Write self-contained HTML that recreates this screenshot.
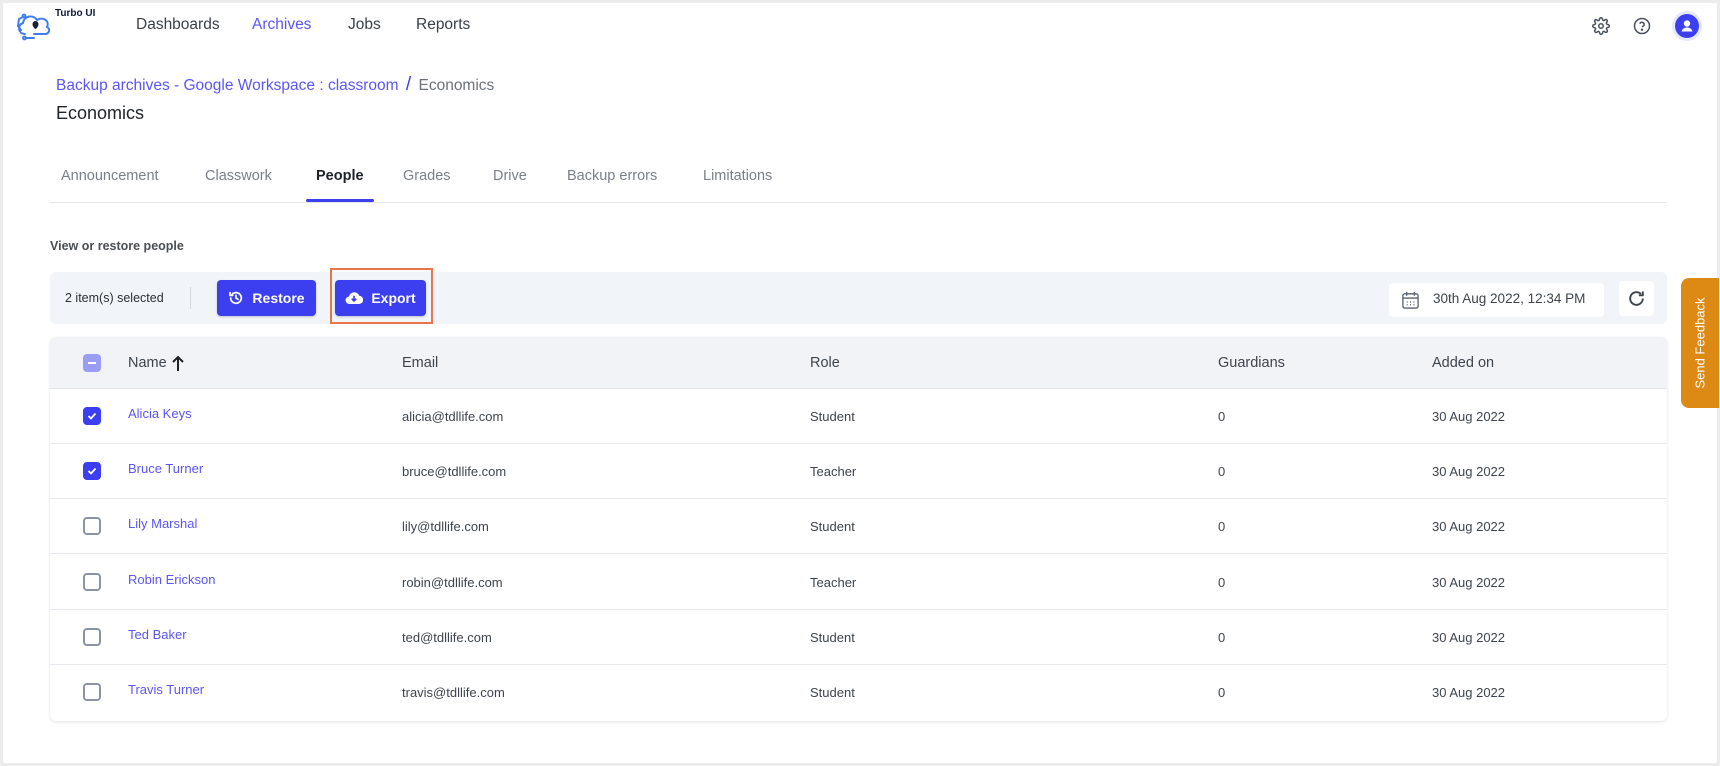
<!DOCTYPE html>
<html><head><meta charset="utf-8"><style>
*{box-sizing:border-box;margin:0;padding:0}
body{width:1720px;height:766px;background:#ececec;font-family:"Liberation Sans",sans-serif;color:#343a40;position:relative;overflow:hidden}
.page{position:absolute;left:3px;top:3px;width:1714px;height:760px;background:#fff}
.a{position:absolute;white-space:nowrap}
.nav{font-size:15.5px;color:#3a3f47;top:16px}
.tab{font-size:14.5px;color:#7a7f87;top:168px}
.tb{background:#f1f4f8;border-radius:6px}
.btn{background:#3b3ff0;color:#fff;border-radius:4px;font-weight:bold;font-size:14px;display:flex;align-items:center;justify-content:center;gap:8px;box-shadow:0 1px 2px rgba(0,0,0,.2)}
.th{font-size:14.5px;color:#3e444c;top:355px}
.row{position:absolute;left:50px;width:1617px;height:55px;border-bottom:1px solid #e6e9ee;font-size:13px;color:#3e444c}
.row span{position:absolute;top:20px}
.row .n{left:78px;color:#5b55f5}
.cb{position:absolute;left:33px;top:18px;width:18px;height:18px;border-radius:4px;border:2px solid #8a94a6;background:#fff}
.cb.on{background:#3b3ff0;border-color:#3b3ff0}
</style></head><body>
<div class="page"></div>
<svg class="a" style="left:14px;top:10px" width="38" height="32" viewBox="0 0 38 32" fill="none" stroke="#3d7df0" stroke-width="2" stroke-linecap="round"><path d="M11 24 C4 24 3 15 9 13 C10 6 19 4 23 10 C29 6 36 11 33 17 C37 19 35 24 31 24 L20 24"/><path d="M9 7 L5 9 L4 16 L7 20"/><circle cx="10" cy="6" r="1.4"/><path d="M12 28 L20 28"/><circle cx="10.5" cy="28" r="1.4"/><path d="M19 14 a2.5 2.5 0 1 1 5 0 c0 2.5 -2.5 4.5 -2.5 4.5 c0 0 -2.5 -2 -2.5 -4.5z" fill="#1a1f36" stroke="#1a1f36" stroke-width="1"/></svg>
<div class="a" style="left:55px;top:8px;font-size:10px;font-weight:bold;color:#111a3a">Turbo UI</div>
<div class="a nav" style="left:136px">Dashboards</div>
<div class="a nav" style="left:252px;color:#5b55f5">Archives</div>
<div class="a nav" style="left:348px">Jobs</div>
<div class="a nav" style="left:416px">Reports</div>
<svg class="a" style="left:1592px;top:17px" width="18" height="18" viewBox="0 0 24 24" fill="none" stroke="#4a5160" stroke-width="2"><circle cx="12" cy="12" r="3"/><path d="M19.4 15a1.7 1.7 0 0 0 .3 1.8l.1.1a2 2 0 1 1-2.8 2.8l-.1-.1a1.7 1.7 0 0 0-1.8-.3 1.7 1.7 0 0 0-1 1.5V21a2 2 0 1 1-4 0v-.1a1.7 1.7 0 0 0-1.1-1.5 1.7 1.7 0 0 0-1.8.3l-.1.1a2 2 0 1 1-2.8-2.8l.1-.1a1.7 1.7 0 0 0 .3-1.8 1.7 1.7 0 0 0-1.5-1H3a2 2 0 1 1 0-4h.1a1.7 1.7 0 0 0 1.5-1.1 1.7 1.7 0 0 0-.3-1.8l-.1-.1a2 2 0 1 1 2.8-2.8l.1.1a1.7 1.7 0 0 0 1.8.3H9a1.7 1.7 0 0 0 1-1.5V3a2 2 0 1 1 4 0v.1a1.7 1.7 0 0 0 1 1.5 1.7 1.7 0 0 0 1.8-.3l.1-.1a2 2 0 1 1 2.8 2.8l-.1.1a1.7 1.7 0 0 0-.3 1.8V9a1.7 1.7 0 0 0 1.5 1H21a2 2 0 1 1 0 4h-.1a1.7 1.7 0 0 0-1.5 1z"/></svg>
<svg class="a" style="left:1633px;top:17px" width="18" height="18" viewBox="0 0 24 24" fill="none" stroke="#4a5160" stroke-width="2"><circle cx="12" cy="12" r="10"/><path d="M9.1 9a3 3 0 0 1 5.8 1c0 2-3 3-3 3"/><circle cx="12" cy="17" r=".6" fill="#4a5160"/></svg>
<div class="a" style="left:1675px;top:14px;width:24px;height:24px;border-radius:50%;background:#3b3ff0;box-shadow:0 0 0 3px #e3e8fb"><svg width="24" height="24" viewBox="0 0 24 24" fill="#fff"><circle cx="12" cy="9.5" r="3.2"/><path d="M6.5 17.5c1-3 3-4 5.5-4s4.5 1 5.5 4z"/></svg></div>
<div class="a" style="left:56px;top:74px;font-size:15.5px;color:#5b55f5">Backup archives - Google Workspace : classroom <span style="color:#3b3ff0;font-size:19px;margin:0 3px">/</span> <span style="color:#6c717a">Economics</span></div>
<div class="a" style="left:56px;top:103px;font-size:18px;color:#212529">Economics</div>
<div class="a tab" style="left:61px">Announcement</div>
<div class="a tab" style="left:205px">Classwork</div>
<div class="a tab" style="left:316px;color:#1d2127;font-weight:bold">People</div>
<div class="a tab" style="left:403px">Grades</div>
<div class="a tab" style="left:493px">Drive</div>
<div class="a tab" style="left:567px">Backup errors</div>
<div class="a tab" style="left:703px">Limitations</div>
<div class="a" style="left:50px;top:202px;width:1617px;height:1px;background:#e3e6eb"></div>
<div class="a" style="left:306px;top:199px;width:68px;height:3px;background:#3b3ff0;border-radius:2px"></div>
<div class="a" style="left:50px;top:239px;font-size:12.5px;color:#2b3036;font-weight:bold;opacity:.85">View or restore people</div>
<div class="a tb" style="left:50px;top:272px;width:1617px;height:52px"></div>
<div class="a" style="left:65px;top:291px;font-size:12.5px;color:#2b3036">2 item(s) selected</div>
<div class="a" style="left:190px;top:287px;width:1px;height:22px;background:#d3d7de"></div>
<div class="a btn" style="left:217px;top:280px;width:99px;height:36px"><svg width="16" height="16" viewBox="0 0 24 24" fill="none" stroke="#fff" stroke-width="2.6" stroke-linecap="round"><path d="M4 12a8 8 0 1 0 2.3-5.7"/><path d="M3 4v4h4"/><path d="M12 8v4l3 2"/></svg>Restore</div>
<div class="a" style="left:330px;top:268px;width:103px;height:56px;border:2px solid #e8764a"></div>
<div class="a btn" style="left:335px;top:280px;width:91px;height:36px"><svg width="18" height="16" viewBox="0 0 24 20" fill="#fff"><path d="M6 18a5 5 0 0 1-.5-10A7 7 0 0 1 19 7a5.5 5.5 0 0 1-.5 11z"/><path d="M12 7v7M9 11l3 3 3-3" stroke="#3b3ff0" stroke-width="2.2" fill="none"/></svg>Export</div>
<div class="a" style="left:1389px;top:283px;width:215px;height:34px;background:#fff;border-radius:4px"></div>
<svg class="a" style="left:1401px;top:290px" width="19" height="20" viewBox="0 0 20 20" fill="none" stroke="#5a6170" stroke-width="1.4"><rect x="2" y="3.5" width="16" height="15" rx="2"/><path d="M2 8h16M6 1.5v4M14 1.5v4"/><path d="M6 12h1M9.5 12h1M13 12h1M6 15h1M9.5 15h1M13 15h1"/></svg>
<div class="a" style="left:1433px;top:291px;font-size:13.5px;color:#3e444c">30th Aug 2022, 12:34 PM</div>
<div class="a" style="left:1619px;top:281px;width:35px;height:35px;background:#fff;border-radius:4px"><svg style="margin:8px" width="19" height="19" viewBox="0 0 24 24" fill="none" stroke="#3e444c" stroke-width="2.4"><path d="M20 12a8 8 0 1 1-2.4-5.7"/><path d="M20 3v5h-5" stroke-linejoin="round"/></svg></div>
<div class="a" style="left:1681px;top:278px;width:38px;height:130px;background:#dd8a14;border-radius:8px 0 0 8px"><div style="position:absolute;left:19px;top:65px;transform:translate(-50%,-50%) rotate(-90deg);color:#fff;font-size:13px;white-space:nowrap">Send Feedback</div></div>
<div class="a" style="left:50px;top:337px;width:1617px;height:384px;border-radius:6px;box-shadow:0 1px 3px rgba(0,0,0,.12);background:#fff"></div>
<div class="a" style="left:50px;top:337px;width:1617px;height:52px;background:#f1f3f7;border-radius:6px 6px 0 0;border-bottom:1px solid #e3e6eb"></div>
<div class="a" style="left:83px;top:354px;width:18px;height:18px;border-radius:4px;background:#9a9cf5"><div style="position:absolute;left:5px;top:8px;width:8px;height:2px;background:#fff"></div></div>
<div class="a th" style="left:128px">Name</div>
<svg class="a" style="left:171px;top:355px" width="14" height="17" viewBox="0 0 14 17" fill="none" stroke="#1d2127" stroke-width="2"><path d="M7 16V2M2 7l5-5 5 5"/></svg>
<div class="a th" style="left:402px">Email</div>
<div class="a th" style="left:810px">Role</div>
<div class="a th" style="left:1218px">Guardians</div>
<div class="a th" style="left:1432px">Added on</div>
<div class="row" style="top:389px"><div class="cb on"><svg width="14" height="14" viewBox="0 0 14 14"><path d="M3.5 7l2.5 2.5 4.5-5" fill="none" stroke="#fff" stroke-width="1.8"/></svg></div><span class="n" style="top:17px">Alicia Keys</span><span style="left:352px">alicia@tdllife.com</span><span style="left:760px">Student</span><span style="left:1168px">0</span><span style="left:1382px">30 Aug 2022</span></div>
<div class="row" style="top:444px"><div class="cb on"><svg width="14" height="14" viewBox="0 0 14 14"><path d="M3.5 7l2.5 2.5 4.5-5" fill="none" stroke="#fff" stroke-width="1.8"/></svg></div><span class="n" style="top:17px">Bruce Turner</span><span style="left:352px">bruce@tdllife.com</span><span style="left:760px">Teacher</span><span style="left:1168px">0</span><span style="left:1382px">30 Aug 2022</span></div>
<div class="row" style="top:499px"><div class="cb"></div><span class="n" style="top:17px">Lily Marshal</span><span style="left:352px">lily@tdllife.com</span><span style="left:760px">Student</span><span style="left:1168px">0</span><span style="left:1382px">30 Aug 2022</span></div>
<div class="row" style="top:555px"><div class="cb"></div><span class="n" style="top:17px">Robin Erickson</span><span style="left:352px">robin@tdllife.com</span><span style="left:760px">Teacher</span><span style="left:1168px">0</span><span style="left:1382px">30 Aug 2022</span></div>
<div class="row" style="top:610px"><div class="cb"></div><span class="n" style="top:17px">Ted Baker</span><span style="left:352px">ted@tdllife.com</span><span style="left:760px">Student</span><span style="left:1168px">0</span><span style="left:1382px">30 Aug 2022</span></div>
<div class="row" style="top:665px;border-bottom:none"><div class="cb"></div><span class="n" style="top:17px">Travis Turner</span><span style="left:352px">travis@tdllife.com</span><span style="left:760px">Student</span><span style="left:1168px">0</span><span style="left:1382px">30 Aug 2022</span></div>
</body></html>
